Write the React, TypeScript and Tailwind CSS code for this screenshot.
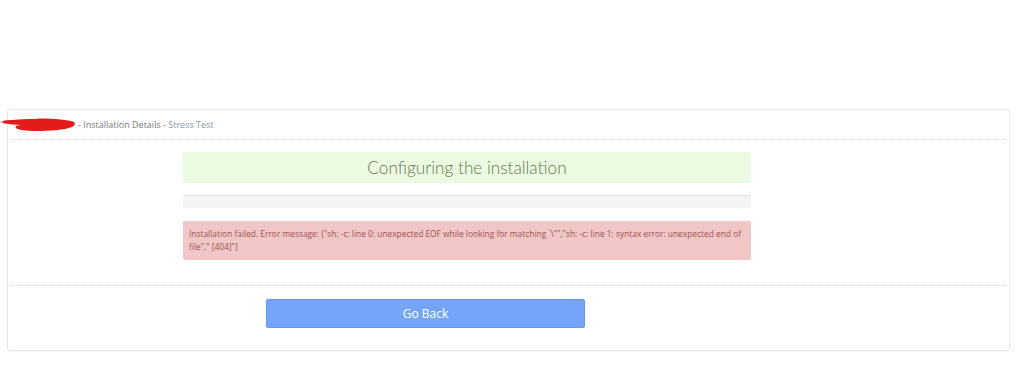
import React from "react";

export default function App() {
  return (
    <div className="w-[1024px] h-[366px] bg-white overflow-hidden" style={{ fontFamily: '"Open Sans", "Liberation Sans", sans-serif' }}>
      <div className="pt-[109px] pl-[7px]">
        <div className="w-[1003px] h-[242px] border border-[#e5e8ee] rounded-[3px] shadow-[0_1px_1px_rgba(0,0,0,0.04)] px-[3px] flex flex-col">
          <div className="h-[30px] border-b border-dotted border-[#dcdcdc] flex items-center">
            <svg width="80" height="18" viewBox="0 0 80 18" className="ml-[-11px] shrink-0">
              <path d="M0 6 C 8 4, 20 3, 34 3 C 48 2, 60 3, 71 5 C 76 6, 76 9, 72 11 C 64 14, 50 15, 36 15 C 26 15, 18 14, 16 12 C 14 10, 18 9, 22 9 C 14 9, 6 8, 0 6 Z" fill="#e31b1b" />
              <path d="M4 6 C 20 5, 44 5, 71 7" stroke="#e31b1b" strokeWidth="3" fill="none" />
            </svg>
            <span className="ml-[-2px] text-[9px] text-[#7a7a7a] leading-none">
              - Installation Details - <span className="text-[#8a9ab0]">Stress Test</span>
            </span>
          </div>
          <div className="pt-[12px] pl-[172px] pb-[25px] border-b border-dotted border-[#dcdcdc]">
            <div className="w-[568px] h-[31px] bg-[#eafbe2] rounded-[2px] flex items-center justify-center">
              <span className="text-[17.2px] font-light text-[#6a7650]" style={{ fontFamily: 'Lato, "Open Sans", sans-serif' }}>
                Configuring the installation
              </span>
            </div>
            <div className="mt-[12px] w-[568px] h-[13px] bg-[#f4f4f4] rounded-[2px] shadow-[inset_0_1px_1px_rgba(0,0,0,0.06)]" />
            <div className="mt-[13px] w-[568px] h-[39px] bg-[#f0c6c6] rounded-[2px] px-[6px] pt-[6px] text-[8.4px] leading-[13px] text-[#a15454]">
              Installation failed. Error message: ["sh: -c: line 0: unexpected EOF while looking for matching `\"","sh: -c: line 1: syntax error: unexpected end of file"," [404]"]
            </div>
          </div>
          <div className="pt-[13px] pl-[255px]">
            <button className="w-[319px] h-[29px] bg-[#74a5fa] border border-[#6a97ee] rounded-[2px] text-white text-[12px] flex items-center justify-center">
              Go Back
            </button>
          </div>
        </div>
      </div>
    </div>
  );
}
